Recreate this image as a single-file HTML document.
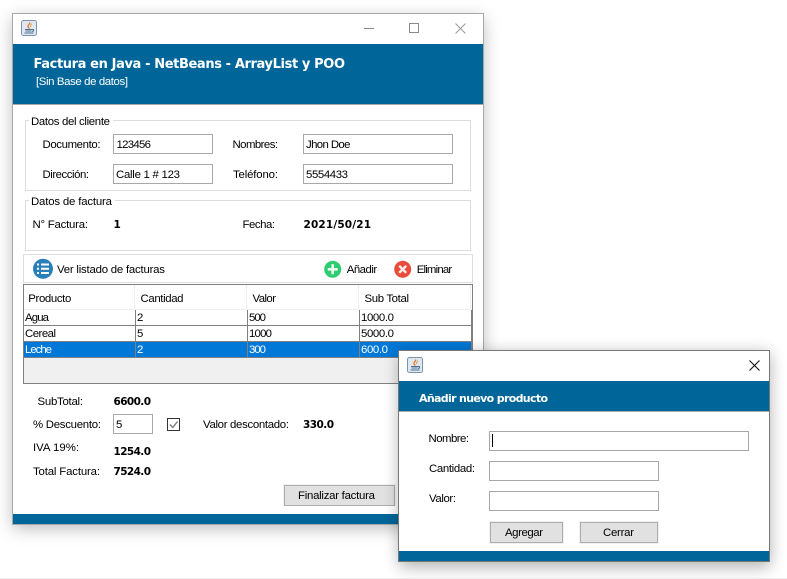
<!DOCTYPE html>
<html><head><meta charset="utf-8"><title>Factura</title>
<style>
html,body{margin:0;padding:0;background:#fff;width:787px;height:579px;overflow:hidden}
svg{position:absolute;left:0;top:0}
.sh{position:absolute;box-sizing:border-box}
text{font-family:"Liberation Sans",sans-serif;font-size:11.4px;fill:#000}
.b{font-family:"DejaVu Sans",sans-serif;font-weight:bold;font-size:10.5px;fill:#000}
</style></head><body>
<div class="sh" style="left:13px;top:14px;width:470px;height:510px;box-shadow:0 4px 16px rgba(0,0,0,.28)"></div>
<svg width="787" height="579" viewBox="0 0 787 579" xmlns="http://www.w3.org/2000/svg">
<defs>
<filter id="s" x="-15%" y="-20%" width="130%" height="140%"><feGaussianBlur stdDeviation="8"/></filter>
<g id="j">
<rect x=".5" y=".5" width="15" height="15" rx="2" fill="#dfe8f1" stroke="#7d93ab"/>
<path d="M8.500 2.500C9.500 4 6.500 5 7 7c.2.800 1 1 1.500 1.500" fill="none" stroke="#e8772e" stroke-width="1.300"/>
<path d="M10.500 3.500C10.500 5 9 5.500 9.500 7" fill="none" stroke="#e8a04e"/>
<path d="M4 9.500h7M4.500 11h6M3.500 13h9M11 9.500h1.500v1.500l-1.500.5" fill="none" stroke="#4f6f91"/>
</g>
</defs>
<rect x="0" y="578" width="787" height="1" fill="#f0f0f0"/>
<!-- main window -->
<rect x="12.500" y="13.500" width="471" height="511" fill="#fff" stroke="#a8a8a8"/>
<use href="#j" x="21" y="20"/>
<path d="M364 28.500h10" stroke="#8a8a8a"/>
<rect x="409.500" y="23.500" width="9" height="9" fill="none" stroke="#8a8a8a"/>
<path d="M455.500 23.500l10 10M465.500 23.500l-10 10" stroke="#999"/>
<rect x="13" y="44" width="470" height="60" fill="#006699"/>
<rect x="13" y="104" width="470" height="1" fill="#a9a9a9"/>
<text x="33.500" y="68" class="b" style="font-size:13px;fill:#fff" textLength="311.500">Factura en Java - NetBeans - ArrayList y POO</text>
<text x="36" y="85" style="fill:#fff" textLength="92">[Sin Base de datos]</text>

<rect x="25.500" y="120.500" width="445" height="70" fill="none" stroke="#ddd"/>
<rect x="29" y="118" width="84" height="5" fill="#fff"/>
<text x="31" y="125" textLength="79">Datos del cliente</text>
<text x="42.500" y="148" textLength="58">Documento:</text>
<text x="232.500" y="148" textLength="45.500">Nombres:</text>
<text x="42.500" y="178" textLength="46.500">Dirección:</text>
<text x="233" y="178" textLength="45">Teléfono:</text>
<g fill="#fff" stroke="#a8a8a8">
<rect x="113.500" y="134.500" width="99" height="19"/>
<rect x="303.500" y="134.500" width="149" height="19"/>
<rect x="113.500" y="164.500" width="99" height="19"/>
<rect x="303.500" y="164.500" width="149" height="19"/>
<rect x="113.500" y="414.500" width="39" height="19"/>
</g>
<text x="116.500" y="148" textLength="34.500">123456</text>
<text x="306" y="148" textLength="44.500">Jhon Doe</text>
<text x="116" y="178" textLength="64">Calle 1 # 123</text>
<text x="306" y="178" textLength="42">5554433</text>

<rect x="25.500" y="200.500" width="445" height="50" fill="none" stroke="#ddd"/>
<rect x="29" y="198" width="86" height="5" fill="#fff"/>
<text x="31" y="205" textLength="81">Datos de factura</text>
<text x="32.500" y="228" textLength="55.500">N° Factura:</text>
<text x="113.500" y="228" class="b">1</text>
<text x="242.500" y="228" textLength="32.500">Fecha:</text>
<text x="303.500" y="228" class="b" textLength="67.500">2021/50/21</text>

<rect x="23.500" y="254.500" width="449" height="28" fill="#fff" stroke="#ddd"/>
<circle cx="43" cy="268.800" r="10" fill="#2980b9"/>
<path d="M41 264.500h8M41 268.800h8M41 273h8" stroke="#fff" stroke-width="2"/>
<path d="M37 264.500h2M37 268.800h2M37 273h2" stroke="#fff" stroke-width="2"/>
<text x="57" y="273" textLength="108">Ver listado de facturas</text>
<circle cx="332.700" cy="269.300" r="8.500" fill="#2ecc71"/>
<path d="M332.700 264.300v10M327.700 269.300h10" stroke="#fff" stroke-width="2.600" opacity=".9"/>
<text x="346.700" y="273" textLength="30.500">Añadir</text>
<circle cx="402.700" cy="269.300" r="8.500" fill="#e74c3c"/>
<path d="M399.200 265.800l7 7M406.200 265.800l-7 7" stroke="#fff" stroke-width="2.400" opacity=".9"/>
<text x="416.700" y="273" textLength="35.500">Eliminar</text>

<!-- table -->
<rect x="23.500" y="284.500" width="449" height="99" fill="#f0f0f0" stroke="#808080"/>
<rect x="24" y="285" width="448" height="25" fill="#fff"/>
<path d="M134.500 285v25M246.500 285v25M358.500 285v25M470.500 285v25M24 309.500h448" stroke="#eee"/>
<rect x="24" y="310" width="448" height="47" fill="#fff"/>
<rect x="24" y="342" width="448" height="15" fill="#0078d7"/>
<path d="M24 325.500h448M24 341.500h448M24 357.500h448M135.500 310v47M247.500 310v47M359.500 310v47M471.500 310v47" stroke="#808080"/>
<text x="28.300" y="302" textLength="43">Producto</text>
<text x="140.500" y="302" textLength="43">Cantidad</text>
<text x="252.500" y="302" textLength="23.500">Valor</text>
<text x="364.500" y="302" textLength="44.500">Sub Total</text>
<text x="25" y="321" textLength="24">Agua</text>
<text x="137" y="321">2</text>
<text x="249" y="321" textLength="17">500</text>
<text x="361" y="321" textLength="33">1000.0</text>
<text x="25" y="337" textLength="31">Cereal</text>
<text x="137" y="337">5</text>
<text x="249" y="337" textLength="23">1000</text>
<text x="361" y="337" textLength="33">5000.0</text>
<text x="25" y="353" style="fill:#fff" textLength="27">Leche</text>
<text x="137" y="353" style="fill:#fff">2</text>
<text x="249" y="353" style="fill:#fff" textLength="17">300</text>
<text x="361" y="353" style="fill:#fff" textLength="27">600.0</text>

<!-- totals -->
<text x="37.500" y="405" textLength="45.500">SubTotal:</text>
<text x="113.500" y="405" class="b" textLength="37.500">6600.0</text>
<text x="33" y="428" textLength="68">% Descuento:</text>
<text x="116" y="428">5</text>
<rect x="167.500" y="418.500" width="12" height="12" fill="#fff" stroke="#333"/>
<path d="M170 424.500l2.800 3 4.700-6" fill="none" stroke="#777" stroke-width="1.300"/>
<text x="203" y="428" textLength="86">Valor descontado:</text>
<text x="303" y="428" class="b" textLength="31">330.0</text>
<text x="33" y="451" textLength="46">IVA 19%:</text>
<text x="113.500" y="455" class="b" textLength="37.500">1254.0</text>
<text x="33" y="475" textLength="67">Total Factura:</text>
<text x="113.500" y="475" class="b" textLength="37.500">7524.0</text>
<rect x="283" y="484" width="113" height="22" fill="#f0f0f0"/>
<rect x="284.500" y="485.500" width="110" height="20" fill="#e1e1e1" stroke="#adadad"/>
<text x="298" y="499" textLength="77">Finalizar factura</text>
<rect x="13" y="514" width="470" height="10" fill="#006699"/>

<!-- dialog -->
<rect x="399" y="353" width="371" height="214" fill="#000" opacity=".3" filter="url(#s)"/>
<rect x="398.500" y="350.500" width="371" height="211" fill="#fff" stroke="#777"/>
<use href="#j" x="407" y="357"/>
<path d="M749.500 360.500l10 10M759.500 360.500l-10 10" stroke="#111" stroke-width="1.100"/>
<rect x="399" y="381" width="370" height="30" fill="#006699"/>
<rect x="399" y="411" width="370" height="1" fill="#a9a9a9"/>
<text x="419" y="402" class="b" style="font-size:11px;fill:#fff" textLength="129">Añadir nuevo producto</text>
<text x="428.500" y="442" textLength="40.500">Nombre:</text>
<text x="429" y="472" textLength="46">Cantidad:</text>
<text x="429" y="502" textLength="27">Valor:</text>
<g fill="#fff" stroke="#a8a8a8">
<rect x="489.500" y="431.500" width="259" height="19"/>
<rect x="489.500" y="461.500" width="169" height="19"/>
<rect x="489.500" y="491.500" width="169" height="19"/>
</g>
<path d="M492.500 434v13" stroke="#000"/>
<rect x="489" y="521" width="75" height="23" fill="#f0f0f0"/>
<rect x="490.500" y="522.500" width="72" height="20" fill="#e1e1e1" stroke="#adadad"/>
<rect x="579" y="521" width="80" height="23" fill="#f0f0f0"/>
<rect x="580.500" y="522.500" width="77" height="20" fill="#e1e1e1" stroke="#adadad"/>
<text x="505" y="536" textLength="38">Agregar</text>
<text x="603" y="536" textLength="31">Cerrar</text>
<rect x="399" y="551" width="370" height="10" fill="#006699"/>
</svg>
</body></html>
